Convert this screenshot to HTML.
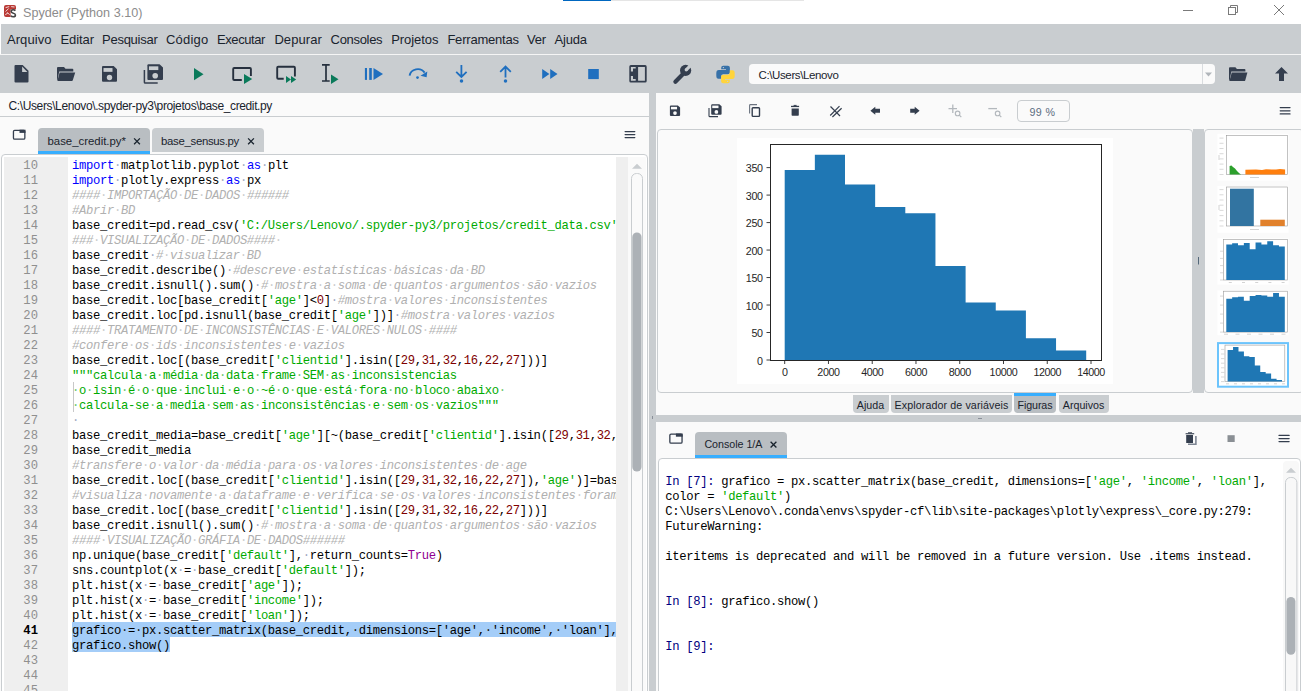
<!DOCTYPE html><html><head><meta charset="utf-8"><style>html,body{margin:0;padding:0;}body{width:1301px;height:691px;overflow:hidden;position:relative;background:#fff;font-family:"Liberation Sans",sans-serif;}</style></head><body>
<div style="position:absolute;left:0px;top:0px;width:1301px;height:24px;background:#ffffff;"></div>
<div style="position:absolute;left:563px;top:0px;width:48px;height:1px;background:#0067c0;"></div>
<div style="position:absolute;left:611px;top:0px;width:193px;height:1px;background:#e5e5e5;"></div>
<div style="position:absolute;left:1px;top:24px;width:1300px;height:30px;background:#c9cdd0;"></div>
<div style="position:absolute;left:0px;top:54px;width:1301px;height:1px;background:#f5f5f5;"></div>
<div style="position:absolute;left:0px;top:55px;width:1301px;height:38px;background:#c9cdd0;"></div>
<div style="position:absolute;left:749px;top:64px;width:466px;height:20px;background:#fafafa;border-radius:4px;"></div>
<div style="position:absolute;left:1202px;top:64px;width:1px;height:20px;background:#d9dcdf;"></div>
<div style="position:absolute;left:0px;top:93px;width:649px;height:598px;background:#fafafa;"></div>
<div style="position:absolute;left:0px;top:116px;width:649px;height:1px;background:#c9cdd0;"></div>
<div style="position:absolute;left:38px;top:128px;width:112px;height:26px;background:#b9bec2;border-radius:4px 4px 0 0;"></div>
<div style="position:absolute;left:38px;top:151px;width:112px;height:3px;background:#37aefe;"></div>
<div style="position:absolute;left:152px;top:128px;width:112px;height:24px;background:#c9cdd0;border-radius:4px 4px 0 0;"></div>
<div style="position:absolute;left:1px;top:154px;width:645px;height:540px;background:#ffffff;border:1px solid #c9cdd0;border-radius:4px;box-sizing:content-box;"></div>
<div style="position:absolute;left:4px;top:157px;width:64px;height:534px;background:#efefef;"></div>
<div style="position:absolute;left:616px;top:157px;width:12px;height:534px;background:#efefef;"></div>
<div style="position:absolute;left:628px;top:157px;width:18px;height:534px;background:#fafafa;"></div>
<div style="position:absolute;left:649px;top:93px;width:7px;height:598px;background:#c9cdd0;"></div>
<div style="position:absolute;left:656px;top:93px;width:645px;height:322px;background:#fafafa;"></div>
<div style="position:absolute;left:657px;top:129px;width:536px;height:264px;background:#fafafa;border:1px solid #c9cdd0;border-radius:4px;box-sizing:border-box;"></div>
<div style="position:absolute;left:737px;top:138px;width:376px;height:246px;background:#ffffff;"></div>
<div style="position:absolute;left:1193px;top:129px;width:11px;height:264px;background:#c9cdd0;"></div>
<div style="position:absolute;left:1204px;top:129px;width:100px;height:264px;background:#fafafa;border:1px solid #c9cdd0;border-radius:4px;box-sizing:border-box;"></div>
<div style="position:absolute;left:1017px;top:100px;width:53px;height:22px;background:#fafafa;border:1px solid #c9cdd0;border-radius:4px;box-sizing:border-box;"></div>
<div style="position:absolute;left:656px;top:415px;width:645px;height:7px;background:#c9cdd0;"></div>
<div style="position:absolute;left:853.3px;top:395px;width:35.30000000000007px;height:17.5px;background:#c9cdd0;border-radius:0 0 4px 4px;"></div>
<div style="position:absolute;left:891.2px;top:395px;width:120.59999999999991px;height:17.5px;background:#c9cdd0;border-radius:0 0 4px 4px;"></div>
<div style="position:absolute;left:1014.3px;top:395px;width:42.0px;height:17.5px;background:#b9bec2;border-radius:0 0 4px 4px;"></div>
<div style="position:absolute;left:1014.3px;top:393px;width:42.0px;height:3px;background:#37aefe;"></div>
<div style="position:absolute;left:1059px;top:395px;width:50px;height:17.5px;background:#c9cdd0;border-radius:0 0 4px 4px;"></div>
<div style="position:absolute;left:656px;top:422px;width:645px;height:269px;background:#fafafa;"></div>
<div style="position:absolute;left:695px;top:432px;width:92px;height:26px;background:#b9bec2;border-radius:4px 4px 0 0;"></div>
<div style="position:absolute;left:695px;top:455px;width:92px;height:3px;background:#37aefe;"></div>
<div style="position:absolute;left:658px;top:458px;width:641px;height:240px;background:#ffffff;border:1px solid #c9cdd0;border-radius:4px;"></div>
<div style="position:absolute;left:1283px;top:461px;width:16px;height:240px;background:#f8f8f8;border-radius:4px;"></div>
<div style="position:absolute;left:68px;top:157px;width:548px;height:534px;overflow:hidden;">
<div style="position:absolute;left:4px;top:465px;width:600px;height:15px;background:#a4cdf8"></div>
<div style="position:absolute;left:4px;top:480px;width:98px;height:15px;background:#a4cdf8"></div>
<div style="position:absolute;left:5px;top:225px;width:1px;height:30px;background:#c8c8c8"></div>
<div style="position:absolute;left:4px;top:2.3px;height:15px;line-height:15px;white-space:pre;font:12.2px 'Liberation Mono', monospace;letter-spacing:-0.321px;"><span style="color:#0000ff;">import</span><span style="color:#a3a9c2">·</span><span style="color:#000000;">matplotlib</span><span style="color:#000000;">.</span><span style="color:#000000;">pyplot</span><span style="color:#a3a9c2">·</span><span style="color:#0000ff;">as</span><span style="color:#a3a9c2">·</span><span style="color:#000000;">plt</span></div>
<div style="position:absolute;left:4px;top:17.3px;height:15px;line-height:15px;white-space:pre;font:12.2px 'Liberation Mono', monospace;letter-spacing:-0.321px;"><span style="color:#0000ff;">import</span><span style="color:#a3a9c2">·</span><span style="color:#000000;">plotly</span><span style="color:#000000;">.</span><span style="color:#000000;">express</span><span style="color:#a3a9c2">·</span><span style="color:#0000ff;">as</span><span style="color:#a3a9c2">·</span><span style="color:#000000;">px</span></div>
<div style="position:absolute;left:4px;top:32.3px;height:15px;line-height:15px;white-space:pre;font:12.2px 'Liberation Mono', monospace;letter-spacing:-0.321px;"><span style="color:#b0b0b0;font-style:italic;">####</span><span style="color:#cdcdcd">·</span><span style="color:#b0b0b0;font-style:italic;">IMPORTAÇÃO</span><span style="color:#cdcdcd">·</span><span style="color:#b0b0b0;font-style:italic;">DE</span><span style="color:#cdcdcd">·</span><span style="color:#b0b0b0;font-style:italic;">DADOS</span><span style="color:#cdcdcd">·</span><span style="color:#b0b0b0;font-style:italic;">######</span></div>
<div style="position:absolute;left:4px;top:47.3px;height:15px;line-height:15px;white-space:pre;font:12.2px 'Liberation Mono', monospace;letter-spacing:-0.321px;"><span style="color:#b0b0b0;font-style:italic;">#Abrir</span><span style="color:#cdcdcd">·</span><span style="color:#b0b0b0;font-style:italic;">BD</span></div>
<div style="position:absolute;left:4px;top:62.3px;height:15px;line-height:15px;white-space:pre;font:12.2px 'Liberation Mono', monospace;letter-spacing:-0.321px;"><span style="color:#000000;">base_credit</span><span style="color:#000000;">=</span><span style="color:#000000;">pd</span><span style="color:#000000;">.</span><span style="color:#000000;">read_csv</span><span style="color:#000000;">(</span><span style="color:#00aa00;">&#x27;C:/Users/Lenovo/.spyder-py3/projetos/credit_data.csv&#x27;</span></div>
<div style="position:absolute;left:4px;top:77.3px;height:15px;line-height:15px;white-space:pre;font:12.2px 'Liberation Mono', monospace;letter-spacing:-0.321px;"><span style="color:#b0b0b0;font-style:italic;">###</span><span style="color:#cdcdcd">·</span><span style="color:#b0b0b0;font-style:italic;">VISUALIZAÇÃO</span><span style="color:#cdcdcd">·</span><span style="color:#b0b0b0;font-style:italic;">DE</span><span style="color:#cdcdcd">·</span><span style="color:#b0b0b0;font-style:italic;">DADOS####</span><span style="color:#cdcdcd">·</span></div>
<div style="position:absolute;left:4px;top:92.3px;height:15px;line-height:15px;white-space:pre;font:12.2px 'Liberation Mono', monospace;letter-spacing:-0.321px;"><span style="color:#000000;">base_credit</span><span style="color:#a3a9c2">·</span><span style="color:#b0b0b0;font-style:italic;">#</span><span style="color:#cdcdcd">·</span><span style="color:#b0b0b0;font-style:italic;">visualizar</span><span style="color:#cdcdcd">·</span><span style="color:#b0b0b0;font-style:italic;">BD</span></div>
<div style="position:absolute;left:4px;top:107.3px;height:15px;line-height:15px;white-space:pre;font:12.2px 'Liberation Mono', monospace;letter-spacing:-0.321px;"><span style="color:#000000;">base_credit</span><span style="color:#000000;">.</span><span style="color:#000000;">describe</span><span style="color:#000000;">(</span><span style="color:#000000;">)</span><span style="color:#a3a9c2">·</span><span style="color:#b0b0b0;font-style:italic;">#descreve</span><span style="color:#cdcdcd">·</span><span style="color:#b0b0b0;font-style:italic;">estatísticas</span><span style="color:#cdcdcd">·</span><span style="color:#b0b0b0;font-style:italic;">básicas</span><span style="color:#cdcdcd">·</span><span style="color:#b0b0b0;font-style:italic;">da</span><span style="color:#cdcdcd">·</span><span style="color:#b0b0b0;font-style:italic;">BD</span></div>
<div style="position:absolute;left:4px;top:122.3px;height:15px;line-height:15px;white-space:pre;font:12.2px 'Liberation Mono', monospace;letter-spacing:-0.321px;"><span style="color:#000000;">base_credit</span><span style="color:#000000;">.</span><span style="color:#000000;">isnull</span><span style="color:#000000;">(</span><span style="color:#000000;">)</span><span style="color:#000000;">.</span><span style="color:#000000;">sum</span><span style="color:#000000;">(</span><span style="color:#000000;">)</span><span style="color:#a3a9c2">·</span><span style="color:#b0b0b0;font-style:italic;">#</span><span style="color:#cdcdcd">·</span><span style="color:#b0b0b0;font-style:italic;">mostra</span><span style="color:#cdcdcd">·</span><span style="color:#b0b0b0;font-style:italic;">a</span><span style="color:#cdcdcd">·</span><span style="color:#b0b0b0;font-style:italic;">soma</span><span style="color:#cdcdcd">·</span><span style="color:#b0b0b0;font-style:italic;">de</span><span style="color:#cdcdcd">·</span><span style="color:#b0b0b0;font-style:italic;">quantos</span><span style="color:#cdcdcd">·</span><span style="color:#b0b0b0;font-style:italic;">argumentos</span><span style="color:#cdcdcd">·</span><span style="color:#b0b0b0;font-style:italic;">são</span><span style="color:#cdcdcd">·</span><span style="color:#b0b0b0;font-style:italic;">vazios</span></div>
<div style="position:absolute;left:4px;top:137.3px;height:15px;line-height:15px;white-space:pre;font:12.2px 'Liberation Mono', monospace;letter-spacing:-0.321px;"><span style="color:#000000;">base_credit</span><span style="color:#000000;">.</span><span style="color:#000000;">loc</span><span style="color:#000000;">[</span><span style="color:#000000;">base_credit</span><span style="color:#000000;">[</span><span style="color:#00aa00;">&#x27;age&#x27;</span><span style="color:#000000;">]</span><span style="color:#000000;">&lt;</span><span style="color:#800000;">0</span><span style="color:#000000;">]</span><span style="color:#a3a9c2">·</span><span style="color:#b0b0b0;font-style:italic;">#mostra</span><span style="color:#cdcdcd">·</span><span style="color:#b0b0b0;font-style:italic;">valores</span><span style="color:#cdcdcd">·</span><span style="color:#b0b0b0;font-style:italic;">inconsistentes</span></div>
<div style="position:absolute;left:4px;top:152.3px;height:15px;line-height:15px;white-space:pre;font:12.2px 'Liberation Mono', monospace;letter-spacing:-0.321px;"><span style="color:#000000;">base_credit</span><span style="color:#000000;">.</span><span style="color:#000000;">loc</span><span style="color:#000000;">[</span><span style="color:#000000;">pd</span><span style="color:#000000;">.</span><span style="color:#000000;">isnull</span><span style="color:#000000;">(</span><span style="color:#000000;">base_credit</span><span style="color:#000000;">[</span><span style="color:#00aa00;">&#x27;age&#x27;</span><span style="color:#000000;">]</span><span style="color:#000000;">)</span><span style="color:#000000;">]</span><span style="color:#a3a9c2">·</span><span style="color:#b0b0b0;font-style:italic;">#mostra</span><span style="color:#cdcdcd">·</span><span style="color:#b0b0b0;font-style:italic;">valores</span><span style="color:#cdcdcd">·</span><span style="color:#b0b0b0;font-style:italic;">vazios</span></div>
<div style="position:absolute;left:4px;top:167.3px;height:15px;line-height:15px;white-space:pre;font:12.2px 'Liberation Mono', monospace;letter-spacing:-0.321px;"><span style="color:#b0b0b0;font-style:italic;">####</span><span style="color:#cdcdcd">·</span><span style="color:#b0b0b0;font-style:italic;">TRATAMENTO</span><span style="color:#cdcdcd">·</span><span style="color:#b0b0b0;font-style:italic;">DE</span><span style="color:#cdcdcd">·</span><span style="color:#b0b0b0;font-style:italic;">INCONSISTÊNCIAS</span><span style="color:#cdcdcd">·</span><span style="color:#b0b0b0;font-style:italic;">E</span><span style="color:#cdcdcd">·</span><span style="color:#b0b0b0;font-style:italic;">VALORES</span><span style="color:#cdcdcd">·</span><span style="color:#b0b0b0;font-style:italic;">NULOS</span><span style="color:#cdcdcd">·</span><span style="color:#b0b0b0;font-style:italic;">####</span></div>
<div style="position:absolute;left:4px;top:182.3px;height:15px;line-height:15px;white-space:pre;font:12.2px 'Liberation Mono', monospace;letter-spacing:-0.321px;"><span style="color:#b0b0b0;font-style:italic;">#confere</span><span style="color:#cdcdcd">·</span><span style="color:#b0b0b0;font-style:italic;">os</span><span style="color:#cdcdcd">·</span><span style="color:#b0b0b0;font-style:italic;">ids</span><span style="color:#cdcdcd">·</span><span style="color:#b0b0b0;font-style:italic;">inconsistentes</span><span style="color:#cdcdcd">·</span><span style="color:#b0b0b0;font-style:italic;">e</span><span style="color:#cdcdcd">·</span><span style="color:#b0b0b0;font-style:italic;">vazios</span></div>
<div style="position:absolute;left:4px;top:197.3px;height:15px;line-height:15px;white-space:pre;font:12.2px 'Liberation Mono', monospace;letter-spacing:-0.321px;"><span style="color:#000000;">base_credit</span><span style="color:#000000;">.</span><span style="color:#000000;">loc</span><span style="color:#000000;">[</span><span style="color:#000000;">(</span><span style="color:#000000;">base_credit</span><span style="color:#000000;">[</span><span style="color:#00aa00;">&#x27;clientid&#x27;</span><span style="color:#000000;">]</span><span style="color:#000000;">.</span><span style="color:#000000;">isin</span><span style="color:#000000;">(</span><span style="color:#000000;">[</span><span style="color:#800000;">29</span><span style="color:#000000;">,</span><span style="color:#800000;">31</span><span style="color:#000000;">,</span><span style="color:#800000;">32</span><span style="color:#000000;">,</span><span style="color:#800000;">16</span><span style="color:#000000;">,</span><span style="color:#800000;">22</span><span style="color:#000000;">,</span><span style="color:#800000;">27</span><span style="color:#000000;">]</span><span style="color:#000000;">)</span><span style="color:#000000;">)</span><span style="color:#000000;">]</span></div>
<div style="position:absolute;left:4px;top:212.3px;height:15px;line-height:15px;white-space:pre;font:12.2px 'Liberation Mono', monospace;letter-spacing:-0.321px;"><span style="color:#00aa00;">&quot;&quot;&quot;calcula</span><span style="color:#6cc86c">·</span><span style="color:#00aa00;">a</span><span style="color:#6cc86c">·</span><span style="color:#00aa00;">média</span><span style="color:#6cc86c">·</span><span style="color:#00aa00;">da</span><span style="color:#6cc86c">·</span><span style="color:#00aa00;">data</span><span style="color:#6cc86c">·</span><span style="color:#00aa00;">frame</span><span style="color:#6cc86c">·</span><span style="color:#00aa00;">SEM</span><span style="color:#6cc86c">·</span><span style="color:#00aa00;">as</span><span style="color:#6cc86c">·</span><span style="color:#00aa00;">inconsistencias</span></div>
<div style="position:absolute;left:4px;top:227.3px;height:15px;line-height:15px;white-space:pre;font:12.2px 'Liberation Mono', monospace;letter-spacing:-0.321px;"><span style="color:#6cc86c">·</span><span style="color:#00aa00;">o</span><span style="color:#6cc86c">·</span><span style="color:#00aa00;">isin</span><span style="color:#6cc86c">·</span><span style="color:#00aa00;">é</span><span style="color:#6cc86c">·</span><span style="color:#00aa00;">o</span><span style="color:#6cc86c">·</span><span style="color:#00aa00;">que</span><span style="color:#6cc86c">·</span><span style="color:#00aa00;">inclui</span><span style="color:#6cc86c">·</span><span style="color:#00aa00;">e</span><span style="color:#6cc86c">·</span><span style="color:#00aa00;">o</span><span style="color:#6cc86c">·</span><span style="color:#00aa00;">~é</span><span style="color:#6cc86c">·</span><span style="color:#00aa00;">o</span><span style="color:#6cc86c">·</span><span style="color:#00aa00;">que</span><span style="color:#6cc86c">·</span><span style="color:#00aa00;">está</span><span style="color:#6cc86c">·</span><span style="color:#00aa00;">fora</span><span style="color:#6cc86c">·</span><span style="color:#00aa00;">no</span><span style="color:#6cc86c">·</span><span style="color:#00aa00;">bloco</span><span style="color:#6cc86c">·</span><span style="color:#00aa00;">abaixo</span><span style="color:#6cc86c">·</span></div>
<div style="position:absolute;left:4px;top:242.3px;height:15px;line-height:15px;white-space:pre;font:12.2px 'Liberation Mono', monospace;letter-spacing:-0.321px;"><span style="color:#6cc86c">·</span><span style="color:#00aa00;">calcula-se</span><span style="color:#6cc86c">·</span><span style="color:#00aa00;">a</span><span style="color:#6cc86c">·</span><span style="color:#00aa00;">media</span><span style="color:#6cc86c">·</span><span style="color:#00aa00;">sem</span><span style="color:#6cc86c">·</span><span style="color:#00aa00;">as</span><span style="color:#6cc86c">·</span><span style="color:#00aa00;">inconsistências</span><span style="color:#6cc86c">·</span><span style="color:#00aa00;">e</span><span style="color:#6cc86c">·</span><span style="color:#00aa00;">sem</span><span style="color:#6cc86c">·</span><span style="color:#00aa00;">os</span><span style="color:#6cc86c">·</span><span style="color:#00aa00;">vazios&quot;&quot;&quot;</span></div>
<div style="position:absolute;left:4px;top:257.3px;height:15px;line-height:15px;white-space:pre;font:12.2px 'Liberation Mono', monospace;letter-spacing:-0.321px;"><span style="color:#a3a9c2">·</span></div>
<div style="position:absolute;left:4px;top:272.3px;height:15px;line-height:15px;white-space:pre;font:12.2px 'Liberation Mono', monospace;letter-spacing:-0.321px;"><span style="color:#000000;">base_credit_media</span><span style="color:#000000;">=</span><span style="color:#000000;">base_credit</span><span style="color:#000000;">[</span><span style="color:#00aa00;">&#x27;age&#x27;</span><span style="color:#000000;">]</span><span style="color:#000000;">[</span><span style="color:#000000;">~</span><span style="color:#000000;">(</span><span style="color:#000000;">base_credit</span><span style="color:#000000;">[</span><span style="color:#00aa00;">&#x27;clientid&#x27;</span><span style="color:#000000;">]</span><span style="color:#000000;">.</span><span style="color:#000000;">isin</span><span style="color:#000000;">(</span><span style="color:#000000;">[</span><span style="color:#800000;">29</span><span style="color:#000000;">,</span><span style="color:#800000;">31</span><span style="color:#000000;">,</span><span style="color:#800000;">32</span><span style="color:#000000;">,</span></div>
<div style="position:absolute;left:4px;top:287.3px;height:15px;line-height:15px;white-space:pre;font:12.2px 'Liberation Mono', monospace;letter-spacing:-0.321px;"><span style="color:#000000;">base_credit_media</span></div>
<div style="position:absolute;left:4px;top:302.3px;height:15px;line-height:15px;white-space:pre;font:12.2px 'Liberation Mono', monospace;letter-spacing:-0.321px;"><span style="color:#b0b0b0;font-style:italic;">#transfere</span><span style="color:#cdcdcd">·</span><span style="color:#b0b0b0;font-style:italic;">o</span><span style="color:#cdcdcd">·</span><span style="color:#b0b0b0;font-style:italic;">valor</span><span style="color:#cdcdcd">·</span><span style="color:#b0b0b0;font-style:italic;">da</span><span style="color:#cdcdcd">·</span><span style="color:#b0b0b0;font-style:italic;">média</span><span style="color:#cdcdcd">·</span><span style="color:#b0b0b0;font-style:italic;">para</span><span style="color:#cdcdcd">·</span><span style="color:#b0b0b0;font-style:italic;">os</span><span style="color:#cdcdcd">·</span><span style="color:#b0b0b0;font-style:italic;">valores</span><span style="color:#cdcdcd">·</span><span style="color:#b0b0b0;font-style:italic;">inconsistentes</span><span style="color:#cdcdcd">·</span><span style="color:#b0b0b0;font-style:italic;">de</span><span style="color:#cdcdcd">·</span><span style="color:#b0b0b0;font-style:italic;">age</span></div>
<div style="position:absolute;left:4px;top:317.3px;height:15px;line-height:15px;white-space:pre;font:12.2px 'Liberation Mono', monospace;letter-spacing:-0.321px;"><span style="color:#000000;">base_credit</span><span style="color:#000000;">.</span><span style="color:#000000;">loc</span><span style="color:#000000;">[</span><span style="color:#000000;">(</span><span style="color:#000000;">base_credit</span><span style="color:#000000;">[</span><span style="color:#00aa00;">&#x27;clientid&#x27;</span><span style="color:#000000;">]</span><span style="color:#000000;">.</span><span style="color:#000000;">isin</span><span style="color:#000000;">(</span><span style="color:#000000;">[</span><span style="color:#800000;">29</span><span style="color:#000000;">,</span><span style="color:#800000;">31</span><span style="color:#000000;">,</span><span style="color:#800000;">32</span><span style="color:#000000;">,</span><span style="color:#800000;">16</span><span style="color:#000000;">,</span><span style="color:#800000;">22</span><span style="color:#000000;">,</span><span style="color:#800000;">27</span><span style="color:#000000;">]</span><span style="color:#000000;">)</span><span style="color:#000000;">,</span><span style="color:#00aa00;">&#x27;age&#x27;</span><span style="color:#000000;">)</span><span style="color:#000000;">]</span><span style="color:#000000;">=</span><span style="color:#000000;">bas</span></div>
<div style="position:absolute;left:4px;top:332.3px;height:15px;line-height:15px;white-space:pre;font:12.2px 'Liberation Mono', monospace;letter-spacing:-0.321px;"><span style="color:#b0b0b0;font-style:italic;">#visualiza</span><span style="color:#cdcdcd">·</span><span style="color:#b0b0b0;font-style:italic;">novamente</span><span style="color:#cdcdcd">·</span><span style="color:#b0b0b0;font-style:italic;">a</span><span style="color:#cdcdcd">·</span><span style="color:#b0b0b0;font-style:italic;">dataframe</span><span style="color:#cdcdcd">·</span><span style="color:#b0b0b0;font-style:italic;">e</span><span style="color:#cdcdcd">·</span><span style="color:#b0b0b0;font-style:italic;">verifica</span><span style="color:#cdcdcd">·</span><span style="color:#b0b0b0;font-style:italic;">se</span><span style="color:#cdcdcd">·</span><span style="color:#b0b0b0;font-style:italic;">os</span><span style="color:#cdcdcd">·</span><span style="color:#b0b0b0;font-style:italic;">valores</span><span style="color:#cdcdcd">·</span><span style="color:#b0b0b0;font-style:italic;">inconsistentes</span><span style="color:#cdcdcd">·</span><span style="color:#b0b0b0;font-style:italic;">foram</span></div>
<div style="position:absolute;left:4px;top:347.3px;height:15px;line-height:15px;white-space:pre;font:12.2px 'Liberation Mono', monospace;letter-spacing:-0.321px;"><span style="color:#000000;">base_credit</span><span style="color:#000000;">.</span><span style="color:#000000;">loc</span><span style="color:#000000;">[</span><span style="color:#000000;">(</span><span style="color:#000000;">base_credit</span><span style="color:#000000;">[</span><span style="color:#00aa00;">&#x27;clientid&#x27;</span><span style="color:#000000;">]</span><span style="color:#000000;">.</span><span style="color:#000000;">isin</span><span style="color:#000000;">(</span><span style="color:#000000;">[</span><span style="color:#800000;">29</span><span style="color:#000000;">,</span><span style="color:#800000;">31</span><span style="color:#000000;">,</span><span style="color:#800000;">32</span><span style="color:#000000;">,</span><span style="color:#800000;">16</span><span style="color:#000000;">,</span><span style="color:#800000;">22</span><span style="color:#000000;">,</span><span style="color:#800000;">27</span><span style="color:#000000;">]</span><span style="color:#000000;">)</span><span style="color:#000000;">)</span><span style="color:#000000;">]</span></div>
<div style="position:absolute;left:4px;top:362.3px;height:15px;line-height:15px;white-space:pre;font:12.2px 'Liberation Mono', monospace;letter-spacing:-0.321px;"><span style="color:#000000;">base_credit</span><span style="color:#000000;">.</span><span style="color:#000000;">isnull</span><span style="color:#000000;">(</span><span style="color:#000000;">)</span><span style="color:#000000;">.</span><span style="color:#000000;">sum</span><span style="color:#000000;">(</span><span style="color:#000000;">)</span><span style="color:#a3a9c2">·</span><span style="color:#b0b0b0;font-style:italic;">#</span><span style="color:#cdcdcd">·</span><span style="color:#b0b0b0;font-style:italic;">mostra</span><span style="color:#cdcdcd">·</span><span style="color:#b0b0b0;font-style:italic;">a</span><span style="color:#cdcdcd">·</span><span style="color:#b0b0b0;font-style:italic;">soma</span><span style="color:#cdcdcd">·</span><span style="color:#b0b0b0;font-style:italic;">de</span><span style="color:#cdcdcd">·</span><span style="color:#b0b0b0;font-style:italic;">quantos</span><span style="color:#cdcdcd">·</span><span style="color:#b0b0b0;font-style:italic;">argumentos</span><span style="color:#cdcdcd">·</span><span style="color:#b0b0b0;font-style:italic;">são</span><span style="color:#cdcdcd">·</span><span style="color:#b0b0b0;font-style:italic;">vazios</span></div>
<div style="position:absolute;left:4px;top:377.3px;height:15px;line-height:15px;white-space:pre;font:12.2px 'Liberation Mono', monospace;letter-spacing:-0.321px;"><span style="color:#b0b0b0;font-style:italic;">####</span><span style="color:#cdcdcd">·</span><span style="color:#b0b0b0;font-style:italic;">VISUALIZAÇÃO</span><span style="color:#cdcdcd">·</span><span style="color:#b0b0b0;font-style:italic;">GRÁFIA</span><span style="color:#cdcdcd">·</span><span style="color:#b0b0b0;font-style:italic;">DE</span><span style="color:#cdcdcd">·</span><span style="color:#b0b0b0;font-style:italic;">DADOS######</span></div>
<div style="position:absolute;left:4px;top:392.3px;height:15px;line-height:15px;white-space:pre;font:12.2px 'Liberation Mono', monospace;letter-spacing:-0.321px;"><span style="color:#000000;">np</span><span style="color:#000000;">.</span><span style="color:#000000;">unique</span><span style="color:#000000;">(</span><span style="color:#000000;">base_credit</span><span style="color:#000000;">[</span><span style="color:#00aa00;">&#x27;default&#x27;</span><span style="color:#000000;">]</span><span style="color:#000000;">,</span><span style="color:#a3a9c2">·</span><span style="color:#000000;">return_counts</span><span style="color:#000000;">=</span><span style="color:#900090;">True</span><span style="color:#000000;">)</span></div>
<div style="position:absolute;left:4px;top:407.3px;height:15px;line-height:15px;white-space:pre;font:12.2px 'Liberation Mono', monospace;letter-spacing:-0.321px;"><span style="color:#000000;">sns</span><span style="color:#000000;">.</span><span style="color:#000000;">countplot</span><span style="color:#000000;">(</span><span style="color:#000000;">x</span><span style="color:#a3a9c2">·</span><span style="color:#000000;">=</span><span style="color:#a3a9c2">·</span><span style="color:#000000;">base_credit</span><span style="color:#000000;">[</span><span style="color:#00aa00;">&#x27;default&#x27;</span><span style="color:#000000;">]</span><span style="color:#000000;">)</span><span style="color:#000000;">;</span></div>
<div style="position:absolute;left:4px;top:422.3px;height:15px;line-height:15px;white-space:pre;font:12.2px 'Liberation Mono', monospace;letter-spacing:-0.321px;"><span style="color:#000000;">plt</span><span style="color:#000000;">.</span><span style="color:#000000;">hist</span><span style="color:#000000;">(</span><span style="color:#000000;">x</span><span style="color:#a3a9c2">·</span><span style="color:#000000;">=</span><span style="color:#a3a9c2">·</span><span style="color:#000000;">base_credit</span><span style="color:#000000;">[</span><span style="color:#00aa00;">&#x27;age&#x27;</span><span style="color:#000000;">]</span><span style="color:#000000;">)</span><span style="color:#000000;">;</span></div>
<div style="position:absolute;left:4px;top:437.3px;height:15px;line-height:15px;white-space:pre;font:12.2px 'Liberation Mono', monospace;letter-spacing:-0.321px;"><span style="color:#000000;">plt</span><span style="color:#000000;">.</span><span style="color:#000000;">hist</span><span style="color:#000000;">(</span><span style="color:#000000;">x</span><span style="color:#a3a9c2">·</span><span style="color:#000000;">=</span><span style="color:#a3a9c2">·</span><span style="color:#000000;">base_credit</span><span style="color:#000000;">[</span><span style="color:#00aa00;">&#x27;income&#x27;</span><span style="color:#000000;">]</span><span style="color:#000000;">)</span><span style="color:#000000;">;</span></div>
<div style="position:absolute;left:4px;top:452.3px;height:15px;line-height:15px;white-space:pre;font:12.2px 'Liberation Mono', monospace;letter-spacing:-0.321px;"><span style="color:#000000;">plt</span><span style="color:#000000;">.</span><span style="color:#000000;">hist</span><span style="color:#000000;">(</span><span style="color:#000000;">x</span><span style="color:#a3a9c2">·</span><span style="color:#000000;">=</span><span style="color:#a3a9c2">·</span><span style="color:#000000;">base_credit</span><span style="color:#000000;">[</span><span style="color:#00aa00;">&#x27;loan&#x27;</span><span style="color:#000000;">]</span><span style="color:#000000;">)</span><span style="color:#000000;">;</span></div>
<div style="position:absolute;left:4px;top:467.3px;height:15px;line-height:15px;white-space:pre;font:12.2px 'Liberation Mono', monospace;letter-spacing:-0.321px;"><span style="color:#000000;">grafico</span><span style="color:#1a1a1a">·</span><span style="color:#000000;">=</span><span style="color:#1a1a1a">·</span><span style="color:#000000;">px</span><span style="color:#000000;">.</span><span style="color:#000000;">scatter_matrix</span><span style="color:#000000;">(</span><span style="color:#000000;">base_credit</span><span style="color:#000000;">,</span><span style="color:#1a1a1a">·</span><span style="color:#000000;">dimensions</span><span style="color:#000000;">=</span><span style="color:#000000;">[</span><span style="color:#000000;">&#x27;age&#x27;</span><span style="color:#000000;">,</span><span style="color:#1a1a1a">·</span><span style="color:#000000;">&#x27;income&#x27;</span><span style="color:#000000;">,</span><span style="color:#1a1a1a">·</span><span style="color:#000000;">&#x27;loan&#x27;</span><span style="color:#000000;">]</span><span style="color:#000000;">,</span></div>
<div style="position:absolute;left:4px;top:482.3px;height:15px;line-height:15px;white-space:pre;font:12.2px 'Liberation Mono', monospace;letter-spacing:-0.321px;"><span style="color:#000000;">grafico</span><span style="color:#000000;">.</span><span style="color:#000000;">show</span><span style="color:#000000;">(</span><span style="color:#000000;">)</span></div>
</div>
<div style="position:absolute;left:3px;width:35px;text-align:right;top:159.3px;height:15px;line-height:15px;white-space:pre;font:12.2px 'Liberation Mono', monospace;color:#8f8f8f;">10</div>
<div style="position:absolute;left:3px;width:35px;text-align:right;top:174.3px;height:15px;line-height:15px;white-space:pre;font:12.2px 'Liberation Mono', monospace;color:#8f8f8f;">11</div>
<div style="position:absolute;left:3px;width:35px;text-align:right;top:189.3px;height:15px;line-height:15px;white-space:pre;font:12.2px 'Liberation Mono', monospace;color:#8f8f8f;">12</div>
<div style="position:absolute;left:3px;width:35px;text-align:right;top:204.3px;height:15px;line-height:15px;white-space:pre;font:12.2px 'Liberation Mono', monospace;color:#8f8f8f;">13</div>
<div style="position:absolute;left:3px;width:35px;text-align:right;top:219.3px;height:15px;line-height:15px;white-space:pre;font:12.2px 'Liberation Mono', monospace;color:#8f8f8f;">14</div>
<div style="position:absolute;left:3px;width:35px;text-align:right;top:234.3px;height:15px;line-height:15px;white-space:pre;font:12.2px 'Liberation Mono', monospace;color:#8f8f8f;">15</div>
<div style="position:absolute;left:3px;width:35px;text-align:right;top:249.3px;height:15px;line-height:15px;white-space:pre;font:12.2px 'Liberation Mono', monospace;color:#8f8f8f;">16</div>
<div style="position:absolute;left:3px;width:35px;text-align:right;top:264.3px;height:15px;line-height:15px;white-space:pre;font:12.2px 'Liberation Mono', monospace;color:#8f8f8f;">17</div>
<div style="position:absolute;left:3px;width:35px;text-align:right;top:279.3px;height:15px;line-height:15px;white-space:pre;font:12.2px 'Liberation Mono', monospace;color:#8f8f8f;">18</div>
<div style="position:absolute;left:3px;width:35px;text-align:right;top:294.3px;height:15px;line-height:15px;white-space:pre;font:12.2px 'Liberation Mono', monospace;color:#8f8f8f;">19</div>
<div style="position:absolute;left:3px;width:35px;text-align:right;top:309.3px;height:15px;line-height:15px;white-space:pre;font:12.2px 'Liberation Mono', monospace;color:#8f8f8f;">20</div>
<div style="position:absolute;left:3px;width:35px;text-align:right;top:324.3px;height:15px;line-height:15px;white-space:pre;font:12.2px 'Liberation Mono', monospace;color:#8f8f8f;">21</div>
<div style="position:absolute;left:3px;width:35px;text-align:right;top:339.3px;height:15px;line-height:15px;white-space:pre;font:12.2px 'Liberation Mono', monospace;color:#8f8f8f;">22</div>
<div style="position:absolute;left:3px;width:35px;text-align:right;top:354.3px;height:15px;line-height:15px;white-space:pre;font:12.2px 'Liberation Mono', monospace;color:#8f8f8f;">23</div>
<div style="position:absolute;left:3px;width:35px;text-align:right;top:369.3px;height:15px;line-height:15px;white-space:pre;font:12.2px 'Liberation Mono', monospace;color:#8f8f8f;">24</div>
<div style="position:absolute;left:3px;width:35px;text-align:right;top:384.3px;height:15px;line-height:15px;white-space:pre;font:12.2px 'Liberation Mono', monospace;color:#8f8f8f;">25</div>
<div style="position:absolute;left:3px;width:35px;text-align:right;top:399.3px;height:15px;line-height:15px;white-space:pre;font:12.2px 'Liberation Mono', monospace;color:#8f8f8f;">26</div>
<div style="position:absolute;left:3px;width:35px;text-align:right;top:414.3px;height:15px;line-height:15px;white-space:pre;font:12.2px 'Liberation Mono', monospace;color:#8f8f8f;">27</div>
<div style="position:absolute;left:3px;width:35px;text-align:right;top:429.3px;height:15px;line-height:15px;white-space:pre;font:12.2px 'Liberation Mono', monospace;color:#8f8f8f;">28</div>
<div style="position:absolute;left:3px;width:35px;text-align:right;top:444.3px;height:15px;line-height:15px;white-space:pre;font:12.2px 'Liberation Mono', monospace;color:#8f8f8f;">29</div>
<div style="position:absolute;left:3px;width:35px;text-align:right;top:459.3px;height:15px;line-height:15px;white-space:pre;font:12.2px 'Liberation Mono', monospace;color:#8f8f8f;">30</div>
<div style="position:absolute;left:3px;width:35px;text-align:right;top:474.3px;height:15px;line-height:15px;white-space:pre;font:12.2px 'Liberation Mono', monospace;color:#8f8f8f;">31</div>
<div style="position:absolute;left:3px;width:35px;text-align:right;top:489.3px;height:15px;line-height:15px;white-space:pre;font:12.2px 'Liberation Mono', monospace;color:#8f8f8f;">32</div>
<div style="position:absolute;left:3px;width:35px;text-align:right;top:504.3px;height:15px;line-height:15px;white-space:pre;font:12.2px 'Liberation Mono', monospace;color:#8f8f8f;">33</div>
<div style="position:absolute;left:3px;width:35px;text-align:right;top:519.3px;height:15px;line-height:15px;white-space:pre;font:12.2px 'Liberation Mono', monospace;color:#8f8f8f;">34</div>
<div style="position:absolute;left:3px;width:35px;text-align:right;top:534.3px;height:15px;line-height:15px;white-space:pre;font:12.2px 'Liberation Mono', monospace;color:#8f8f8f;">35</div>
<div style="position:absolute;left:3px;width:35px;text-align:right;top:549.3px;height:15px;line-height:15px;white-space:pre;font:12.2px 'Liberation Mono', monospace;color:#8f8f8f;">36</div>
<div style="position:absolute;left:3px;width:35px;text-align:right;top:564.3px;height:15px;line-height:15px;white-space:pre;font:12.2px 'Liberation Mono', monospace;color:#8f8f8f;">37</div>
<div style="position:absolute;left:3px;width:35px;text-align:right;top:579.3px;height:15px;line-height:15px;white-space:pre;font:12.2px 'Liberation Mono', monospace;color:#8f8f8f;">38</div>
<div style="position:absolute;left:3px;width:35px;text-align:right;top:594.3px;height:15px;line-height:15px;white-space:pre;font:12.2px 'Liberation Mono', monospace;color:#8f8f8f;">39</div>
<div style="position:absolute;left:3px;width:35px;text-align:right;top:609.3px;height:15px;line-height:15px;white-space:pre;font:12.2px 'Liberation Mono', monospace;color:#8f8f8f;">40</div>
<div style="position:absolute;left:3px;width:35px;text-align:right;top:624.3px;height:15px;line-height:15px;white-space:pre;font:bold 12.2px 'Liberation Mono', monospace;color:#000;">41</div>
<div style="position:absolute;left:3px;width:35px;text-align:right;top:639.3px;height:15px;line-height:15px;white-space:pre;font:12.2px 'Liberation Mono', monospace;color:#8f8f8f;">42</div>
<div style="position:absolute;left:3px;width:35px;text-align:right;top:654.3px;height:15px;line-height:15px;white-space:pre;font:12.2px 'Liberation Mono', monospace;color:#8f8f8f;">43</div>
<div style="position:absolute;left:3px;width:35px;text-align:right;top:669.3px;height:15px;line-height:15px;white-space:pre;font:12.2px 'Liberation Mono', monospace;color:#8f8f8f;">44</div>
<div style="position:absolute;left:3px;width:35px;text-align:right;top:684.3px;height:15px;line-height:15px;white-space:pre;font:12.2px 'Liberation Mono', monospace;color:#8f8f8f;">45</div>
<div style="position:absolute;left:665.2px;top:474.8px;height:15px;line-height:15px;white-space:pre;font:12.2px 'Liberation Mono', monospace;letter-spacing:-0.321px;"><span style="color:#000080;">In [</span><span style="color:#000080;">7</span><span style="color:#000080;">]: </span><span style="color:#000000;">grafico = px.scatter_matrix(base_credit, dimensions=[</span><span style="color:#00aa00;">&#x27;age&#x27;</span><span style="color:#000000;">, </span><span style="color:#00aa00;">&#x27;income&#x27;</span><span style="color:#000000;">, </span><span style="color:#00aa00;">&#x27;loan&#x27;</span><span style="color:#000000;">],</span></div>
<div style="position:absolute;left:665.2px;top:489.8px;height:15px;line-height:15px;white-space:pre;font:12.2px 'Liberation Mono', monospace;letter-spacing:-0.321px;"><span style="color:#000000;">color = </span><span style="color:#00aa00;">&#x27;default&#x27;</span><span style="color:#000000;">)</span></div>
<div style="position:absolute;left:665.2px;top:504.8px;height:15px;line-height:15px;white-space:pre;font:12.2px 'Liberation Mono', monospace;letter-spacing:-0.321px;"><span style="color:#000000;">C:\Users\Lenovo\.conda\envs\spyder-cf\lib\site-packages\plotly\express\_core.py:279:</span></div>
<div style="position:absolute;left:665.2px;top:519.8px;height:15px;line-height:15px;white-space:pre;font:12.2px 'Liberation Mono', monospace;letter-spacing:-0.321px;"><span style="color:#000000;">FutureWarning:</span></div>
<div style="position:absolute;left:665.2px;top:534.8px;height:15px;line-height:15px;white-space:pre;font:12.2px 'Liberation Mono', monospace;letter-spacing:-0.321px;"></div>
<div style="position:absolute;left:665.2px;top:549.8px;height:15px;line-height:15px;white-space:pre;font:12.2px 'Liberation Mono', monospace;letter-spacing:-0.321px;"><span style="color:#000000;">iteritems is deprecated and will be removed in a future version. Use .items instead.</span></div>
<div style="position:absolute;left:665.2px;top:564.8px;height:15px;line-height:15px;white-space:pre;font:12.2px 'Liberation Mono', monospace;letter-spacing:-0.321px;"></div>
<div style="position:absolute;left:665.2px;top:579.8px;height:15px;line-height:15px;white-space:pre;font:12.2px 'Liberation Mono', monospace;letter-spacing:-0.321px;"></div>
<div style="position:absolute;left:665.2px;top:594.8px;height:15px;line-height:15px;white-space:pre;font:12.2px 'Liberation Mono', monospace;letter-spacing:-0.321px;"><span style="color:#000080;">In [</span><span style="color:#000080;">8</span><span style="color:#000080;">]: </span><span style="color:#000000;">grafico.show()</span></div>
<div style="position:absolute;left:665.2px;top:609.8px;height:15px;line-height:15px;white-space:pre;font:12.2px 'Liberation Mono', monospace;letter-spacing:-0.321px;"></div>
<div style="position:absolute;left:665.2px;top:624.8px;height:15px;line-height:15px;white-space:pre;font:12.2px 'Liberation Mono', monospace;letter-spacing:-0.321px;"></div>
<div style="position:absolute;left:665.2px;top:639.8px;height:15px;line-height:15px;white-space:pre;font:12.2px 'Liberation Mono', monospace;letter-spacing:-0.321px;"><span style="color:#000080;">In [</span><span style="color:#000080;">9</span><span style="color:#000080;">]: </span></div>
<svg style="position:absolute;left:0;top:0" width="1301" height="691" viewBox="0 0 1301 691">
<path d="M784.70 360.5 V169.90 H814.85 V154.80 H845.00 V184.60 H875.15 V207.10 H905.30 V213.20 H935.45 V266.00 H965.60 V302.60 H995.75 V310.60 H1025.90 V338.30 H1056.05 V350.40 H1086.20 V360.5 Z" fill="#1f77b4"/>
<rect x="770.5" y="144.5" width="331" height="216" fill="none" stroke="#262626" stroke-width="1"/>
<line x1="766.5" y1="360.00" x2="770" y2="360.00" stroke="#262626" stroke-width="0.9"/>
<text x="762.5" y="364.70" font-family="Liberation Sans" font-size="10.7" fill="#262626" text-anchor="end" letter-spacing="-0.4">0</text>
<line x1="766.5" y1="332.51" x2="770" y2="332.51" stroke="#262626" stroke-width="0.9"/>
<text x="762.5" y="337.21" font-family="Liberation Sans" font-size="10.7" fill="#262626" text-anchor="end" letter-spacing="-0.4">50</text>
<line x1="766.5" y1="305.03" x2="770" y2="305.03" stroke="#262626" stroke-width="0.9"/>
<text x="762.5" y="309.73" font-family="Liberation Sans" font-size="10.7" fill="#262626" text-anchor="end" letter-spacing="-0.4">100</text>
<line x1="766.5" y1="277.55" x2="770" y2="277.55" stroke="#262626" stroke-width="0.9"/>
<text x="762.5" y="282.25" font-family="Liberation Sans" font-size="10.7" fill="#262626" text-anchor="end" letter-spacing="-0.4">150</text>
<line x1="766.5" y1="250.06" x2="770" y2="250.06" stroke="#262626" stroke-width="0.9"/>
<text x="762.5" y="254.76" font-family="Liberation Sans" font-size="10.7" fill="#262626" text-anchor="end" letter-spacing="-0.4">200</text>
<line x1="766.5" y1="222.58" x2="770" y2="222.58" stroke="#262626" stroke-width="0.9"/>
<text x="762.5" y="227.28" font-family="Liberation Sans" font-size="10.7" fill="#262626" text-anchor="end" letter-spacing="-0.4">250</text>
<line x1="766.5" y1="195.09" x2="770" y2="195.09" stroke="#262626" stroke-width="0.9"/>
<text x="762.5" y="199.79" font-family="Liberation Sans" font-size="10.7" fill="#262626" text-anchor="end" letter-spacing="-0.4">300</text>
<line x1="766.5" y1="167.61" x2="770" y2="167.61" stroke="#262626" stroke-width="0.9"/>
<text x="762.5" y="172.31" font-family="Liberation Sans" font-size="10.7" fill="#262626" text-anchor="end" letter-spacing="-0.4">350</text>
<line x1="784.70" y1="361" x2="784.70" y2="364" stroke="#262626" stroke-width="0.9"/>
<text x="784.70" y="375.8" font-family="Liberation Sans" font-size="10.7" fill="#262626" text-anchor="middle" letter-spacing="-0.4">0</text>
<line x1="828.46" y1="361" x2="828.46" y2="364" stroke="#262626" stroke-width="0.9"/>
<text x="828.46" y="375.8" font-family="Liberation Sans" font-size="10.7" fill="#262626" text-anchor="middle" letter-spacing="-0.4">2000</text>
<line x1="872.22" y1="361" x2="872.22" y2="364" stroke="#262626" stroke-width="0.9"/>
<text x="872.22" y="375.8" font-family="Liberation Sans" font-size="10.7" fill="#262626" text-anchor="middle" letter-spacing="-0.4">4000</text>
<line x1="915.97" y1="361" x2="915.97" y2="364" stroke="#262626" stroke-width="0.9"/>
<text x="915.97" y="375.8" font-family="Liberation Sans" font-size="10.7" fill="#262626" text-anchor="middle" letter-spacing="-0.4">6000</text>
<line x1="959.73" y1="361" x2="959.73" y2="364" stroke="#262626" stroke-width="0.9"/>
<text x="959.73" y="375.8" font-family="Liberation Sans" font-size="10.7" fill="#262626" text-anchor="middle" letter-spacing="-0.4">8000</text>
<line x1="1003.49" y1="361" x2="1003.49" y2="364" stroke="#262626" stroke-width="0.9"/>
<text x="1003.49" y="375.8" font-family="Liberation Sans" font-size="10.7" fill="#262626" text-anchor="middle" letter-spacing="-0.4">10000</text>
<line x1="1047.25" y1="361" x2="1047.25" y2="364" stroke="#262626" stroke-width="0.9"/>
<text x="1047.25" y="375.8" font-family="Liberation Sans" font-size="10.7" fill="#262626" text-anchor="middle" letter-spacing="-0.4">12000</text>
<line x1="1091.01" y1="361" x2="1091.01" y2="364" stroke="#262626" stroke-width="0.9"/>
<text x="1091.01" y="375.8" font-family="Liberation Sans" font-size="10.7" fill="#262626" text-anchor="middle" letter-spacing="-0.4">14000</text>
<rect x="1217.4" y="133.8" width="71.2" height="46.8" fill="#ffffff"/>
<rect x="1226.3" y="135.4" width="61.299999999999955" height="39.099999999999994" fill="none" stroke="#9a9a9a" stroke-width="0.6"/>
<path d="M1229.6 174.5 L1229.6 166 L1231.5 165.6 L1233 167 L1235 168.5 L1237 171 L1239 173 L1241 174.5 Z" fill="#2ca02c"/>
<path d="M1245.4 174.5 L1245.4 169.8 L1256 169.4 L1262 170 L1266 169.3 L1276 169.5 L1280 169 L1285.1 169.6 L1285.1 174.5 Z" fill="#ff7f0e"/>
<line x1="1219.5" y1="174.5" x2="1223.5" y2="174.5" stroke="#c8c8c8" stroke-width="0.7"/>
<line x1="1219.5" y1="169.3" x2="1223.5" y2="169.3" stroke="#c8c8c8" stroke-width="0.7"/>
<line x1="1219.5" y1="164.1" x2="1223.5" y2="164.1" stroke="#c8c8c8" stroke-width="0.7"/>
<line x1="1219.5" y1="158.9" x2="1223.5" y2="158.9" stroke="#c8c8c8" stroke-width="0.7"/>
<line x1="1219.5" y1="153.7" x2="1223.5" y2="153.7" stroke="#c8c8c8" stroke-width="0.7"/>
<line x1="1219.5" y1="148.5" x2="1223.5" y2="148.5" stroke="#c8c8c8" stroke-width="0.7"/>
<line x1="1219.5" y1="143.3" x2="1223.5" y2="143.3" stroke="#c8c8c8" stroke-width="0.7"/>
<line x1="1219.5" y1="138.1" x2="1223.5" y2="138.1" stroke="#c8c8c8" stroke-width="0.7"/>
<line x1="1250" y1="177.5" x2="1259" y2="177.5" stroke="#c8c8c8" stroke-width="0.8"/>
<line x1="1219" y1="155" x2="1219" y2="160" stroke="#c8c8c8" stroke-width="0.8"/>
<rect x="1217.4" y="186" width="71.2" height="46.7" fill="#ffffff"/>
<rect x="1226.3" y="187" width="61.299999999999955" height="39" fill="none" stroke="#9a9a9a" stroke-width="0.6"/>
<rect x="1230" y="188.7" width="23.8" height="37.3" fill="#3274a1"/>
<rect x="1260.3" y="219.7" width="24.5" height="6.3" fill="#e1812c"/>
<line x1="1219.5" y1="226.0" x2="1223.5" y2="226.0" stroke="#c8c8c8" stroke-width="0.7"/>
<line x1="1219.5" y1="220.8" x2="1223.5" y2="220.8" stroke="#c8c8c8" stroke-width="0.7"/>
<line x1="1219.5" y1="215.6" x2="1223.5" y2="215.6" stroke="#c8c8c8" stroke-width="0.7"/>
<line x1="1219.5" y1="210.4" x2="1223.5" y2="210.4" stroke="#c8c8c8" stroke-width="0.7"/>
<line x1="1219.5" y1="205.2" x2="1223.5" y2="205.2" stroke="#c8c8c8" stroke-width="0.7"/>
<line x1="1219.5" y1="200.0" x2="1223.5" y2="200.0" stroke="#c8c8c8" stroke-width="0.7"/>
<line x1="1219.5" y1="194.8" x2="1223.5" y2="194.8" stroke="#c8c8c8" stroke-width="0.7"/>
<line x1="1219.5" y1="189.6" x2="1223.5" y2="189.6" stroke="#c8c8c8" stroke-width="0.7"/>
<line x1="1250" y1="229.5" x2="1259" y2="229.5" stroke="#c8c8c8" stroke-width="0.8"/>
<line x1="1219" y1="205" x2="1219" y2="210" stroke="#c8c8c8" stroke-width="0.8"/>
<rect x="1217.4" y="238.3" width="71.2" height="46.3" fill="#ffffff"/>
<rect x="1223.5" y="239.4" width="64.09999999999991" height="40.599999999999994" fill="none" stroke="#9a9a9a" stroke-width="0.6"/>
<path d="M1226.30 280.00 V244.40 H1232.15 V243.20 H1238.00 V245.20 H1243.85 V242.90 H1249.70 V249.30 H1255.55 V242.40 H1261.40 V244.40 H1267.25 V241.20 H1273.10 V245.20 H1278.95 V246.60 H1284.80 V280.00 Z" fill="#1f77b4"/>
<line x1="1220" y1="280.0" x2="1223" y2="280.0" stroke="#c8c8c8" stroke-width="0.7"/>
<line x1="1220" y1="272.8" x2="1223" y2="272.8" stroke="#c8c8c8" stroke-width="0.7"/>
<line x1="1220" y1="265.6" x2="1223" y2="265.6" stroke="#c8c8c8" stroke-width="0.7"/>
<line x1="1220" y1="258.4" x2="1223" y2="258.4" stroke="#c8c8c8" stroke-width="0.7"/>
<line x1="1220" y1="251.2" x2="1223" y2="251.2" stroke="#c8c8c8" stroke-width="0.7"/>
<line x1="1228.8" y1="282.5" x2="1231.8" y2="282.5" stroke="#c8c8c8" stroke-width="0.8"/>
<line x1="1242.0" y1="282.5" x2="1245.0" y2="282.5" stroke="#c8c8c8" stroke-width="0.8"/>
<line x1="1255.2" y1="282.5" x2="1258.2" y2="282.5" stroke="#c8c8c8" stroke-width="0.8"/>
<line x1="1268.4" y1="282.5" x2="1271.4" y2="282.5" stroke="#c8c8c8" stroke-width="0.8"/>
<line x1="1281.6" y1="282.5" x2="1284.6" y2="282.5" stroke="#c8c8c8" stroke-width="0.8"/>
<rect x="1217.4" y="290.4" width="71.2" height="44.8" fill="#ffffff"/>
<rect x="1223.5" y="291.2" width="64.09999999999991" height="40.900000000000034" fill="none" stroke="#9a9a9a" stroke-width="0.6"/>
<path d="M1226.30 332.10 V298.80 H1232.15 V297.20 H1238.00 V296.80 H1243.85 V300.70 H1249.70 V296.10 H1255.55 V295.00 H1261.40 V295.60 H1267.25 V296.80 H1273.10 V293.00 H1278.95 V296.80 H1284.80 V332.10 Z" fill="#1f77b4"/>
<line x1="1220" y1="332.1" x2="1223" y2="332.1" stroke="#c8c8c8" stroke-width="0.7"/>
<line x1="1220" y1="323.1" x2="1223" y2="323.1" stroke="#c8c8c8" stroke-width="0.7"/>
<line x1="1220" y1="314.1" x2="1223" y2="314.1" stroke="#c8c8c8" stroke-width="0.7"/>
<line x1="1220" y1="305.1" x2="1223" y2="305.1" stroke="#c8c8c8" stroke-width="0.7"/>
<line x1="1220" y1="296.1" x2="1223" y2="296.1" stroke="#c8c8c8" stroke-width="0.7"/>
<line x1="1224.0" y1="334.2" x2="1228.0" y2="334.2" stroke="#c8c8c8" stroke-width="0.8"/>
<line x1="1235.5" y1="334.2" x2="1239.5" y2="334.2" stroke="#c8c8c8" stroke-width="0.8"/>
<line x1="1247.0" y1="334.2" x2="1251.0" y2="334.2" stroke="#c8c8c8" stroke-width="0.8"/>
<line x1="1258.5" y1="334.2" x2="1262.5" y2="334.2" stroke="#c8c8c8" stroke-width="0.8"/>
<line x1="1270.0" y1="334.2" x2="1274.0" y2="334.2" stroke="#c8c8c8" stroke-width="0.8"/>
<line x1="1281.5" y1="334.2" x2="1285.5" y2="334.2" stroke="#c8c8c8" stroke-width="0.8"/>
<rect x="1218" y="343.1" width="70" height="43.6" fill="#ffffff" stroke="#6cc4fc" stroke-width="2"/>
<rect x="1225" y="345.1" width="59.799999999999955" height="36.5" fill="none" stroke="#9a9a9a" stroke-width="0.6"/>
<path d="M1227.60 381.60 V349.90 H1233.04 V347.10 H1238.48 V351.50 H1243.92 V356.20 H1249.36 V357.00 H1254.80 V365.40 H1260.24 V372.00 H1265.68 V373.50 H1271.12 V378.70 H1276.56 V380.10 H1282.00 V381.60 Z" fill="#1f77b4"/>
<line x1="1221" y1="381.6" x2="1224.5" y2="381.6" stroke="#c8c8c8" stroke-width="0.7"/>
<line x1="1221" y1="377.0" x2="1224.5" y2="377.0" stroke="#c8c8c8" stroke-width="0.7"/>
<line x1="1221" y1="372.4" x2="1224.5" y2="372.4" stroke="#c8c8c8" stroke-width="0.7"/>
<line x1="1221" y1="367.8" x2="1224.5" y2="367.8" stroke="#c8c8c8" stroke-width="0.7"/>
<line x1="1221" y1="363.2" x2="1224.5" y2="363.2" stroke="#c8c8c8" stroke-width="0.7"/>
<line x1="1221" y1="358.6" x2="1224.5" y2="358.6" stroke="#c8c8c8" stroke-width="0.7"/>
<line x1="1221" y1="354.0" x2="1224.5" y2="354.0" stroke="#c8c8c8" stroke-width="0.7"/>
<line x1="1221" y1="349.4" x2="1224.5" y2="349.4" stroke="#c8c8c8" stroke-width="0.7"/>
<line x1="1226.0" y1="383.8" x2="1229.0" y2="383.8" stroke="#c8c8c8" stroke-width="0.8"/>
<line x1="1234.0" y1="383.8" x2="1237.0" y2="383.8" stroke="#c8c8c8" stroke-width="0.8"/>
<line x1="1242.0" y1="383.8" x2="1245.0" y2="383.8" stroke="#c8c8c8" stroke-width="0.8"/>
<line x1="1250.0" y1="383.8" x2="1253.0" y2="383.8" stroke="#c8c8c8" stroke-width="0.8"/>
<line x1="1258.0" y1="383.8" x2="1261.0" y2="383.8" stroke="#c8c8c8" stroke-width="0.8"/>
<line x1="1266.0" y1="383.8" x2="1269.0" y2="383.8" stroke="#c8c8c8" stroke-width="0.8"/>
<line x1="1274.0" y1="383.8" x2="1277.0" y2="383.8" stroke="#c8c8c8" stroke-width="0.8"/>
<line x1="1282.0" y1="383.8" x2="1285.0" y2="383.8" stroke="#c8c8c8" stroke-width="0.8"/>
<line x1="978" y1="418.5" x2="982" y2="418.5" stroke="#8a9099" stroke-width="1"/>
<line x1="652.5" y1="416" x2="652.5" y2="419" stroke="#8a9099" stroke-width="1"/>
<line x1="1198.5" y1="257" x2="1198.5" y2="264.5" stroke="#54687a" stroke-width="1"/>
</svg>
<svg style="position:absolute;left:0;top:0" width="1301" height="691" viewBox="0 0 1301 691">
<rect x="4" y="5" width="12" height="12" rx="2" fill="#b93a36"/>
<path d="M10.6 9.6 H16 V15 Q16 17 14 17 H10.6 Z" fill="#ffffff"/>
<path d="M5.6 7.6 L9.2 6.6 M11.2 6.6 L14.5 7 M5.6 11.5 L8.6 8.5 M5.3 14.6 L7.8 13.2 M7.2 12.3 L9.6 14.8" stroke="#ffffff" stroke-width="1" opacity="0.8" fill="none"/>
<path d="M15.2 10.8 Q14.6 9.8 13.2 9.8 Q11.2 9.8 11.2 11.6 Q11.2 12.9 13.3 13.3 Q15.4 13.7 15.4 15 Q15.4 16.8 13.2 16.8 Q11.5 16.8 10.9 15.6" stroke="#444" stroke-width="1.6" fill="none"/>
<line x1="1183" y1="10.5" x2="1193" y2="10.5" stroke="#7a7a7a" stroke-width="1"/>
<rect x="1228.5" y="7.5" width="7" height="7" fill="none" stroke="#7a7a7a" stroke-width="1"/>
<path d="M1230.5 7.5 V5.5 H1237.5 V12.5 H1235.5" fill="none" stroke="#7a7a7a" stroke-width="1"/>
<path d="M1274 5 L1284 15 M1284 5 L1274 15" stroke="#7a7a7a" stroke-width="1"/>
<path d="M15.5 65 H22.7 L28.5 70.8 V81.5 Q28.5 82.6 27.4 82.6 H15.6 Q14.5 82.6 14.5 81.5 V66.1 Q14.5 65 15.5 65 Z" fill="#343e4e"/>
<path d="M22.1 66.6 V72 H27.4 Z" fill="#c9cdd0"/>
<path d="M57 68 Q57 67 58 67 H64 L65.5 68.8 H72.5 Q73.3 68.8 73.3 69.6 V71.6 H59.2 L57.6 80 H57 Z" fill="#343e4e"/>
<path d="M59.6 72.6 H75.2 L72.8 80.3 Q72.6 81 71.8 81 H57.4 Z" fill="#343e4e"/>
<path d="M103 66 H113.7 L117 69.16 V80.8 Q117 81.8 116 81.8 H103 Q102 81.8 102 80.8 V67 Q102 66 103 66 Z" fill="#343e4e"/>
<rect x="103.50" y="68.05" width="9.00" height="3.79" fill="#c9cdd0"/>
<circle cx="109.50" cy="77.53" r="2.70" fill="#c9cdd0"/>
<path d="M148.4 64.3 H159.568 L163 67.42 V78.9 Q163 79.9 162 79.9 H148.4 Q147.4 79.9 147.4 78.9 V65.3 Q147.4 64.3 148.4 64.3 Z" fill="#343e4e"/>
<rect x="148.96" y="66.33" width="9.36" height="3.74" fill="#c9cdd0"/>
<circle cx="155.20" cy="75.69" r="2.81" fill="#c9cdd0"/>
<path d="M144.4 70 V82.2 Q144.4 83 145.2 83 H157.7" fill="none" stroke="#343e4e" stroke-width="1.5"/>
<path d="M194 68.1 V80.2 L203.5 74.2 Z" fill="#0a7a5a"/>
<path d="M241.8 80 H234.2 Q233.2 80 233.2 79 V69 Q233.2 68 234.2 68 H249.9 Q250.9 68 250.9 69 V76" fill="none" stroke="#26303e" stroke-width="1.9"/>
<path d="M244 74 V84 L252.2 79 Z" fill="#0a7a5a"/>
<path d="M283.7 78.7 H278.2 Q277.2 78.7 277.2 77.7 V67.8 Q277.2 66.8 278.2 66.8 H293.9 Q294.9 66.8 294.9 67.8 V76.4" fill="none" stroke="#26303e" stroke-width="1.9"/>
<path d="M286 76 V83 L291 79.5 Z M291 76 V83 L296.2 79.5 Z" fill="#0a7a5a"/>
<path d="M322 64.9 H329.7 M322 81 H329.7 M326 64.9 V81" fill="none" stroke="#26303e" stroke-width="1.7"/>
<path d="M331 74.5 V84 L338.5 79.2 Z" fill="#0a7a5a"/>
<rect x="364.9" y="68" width="2.1" height="11.9" fill="#1f6fbf"/><rect x="369.2" y="68" width="2.6" height="11.9" fill="#1f6fbf"/>
<path d="M373.5 68 V80 L383 74 Z" fill="#1f6fbf"/>
<path d="M409.6 75.6 A8.2 7.5 0 0 1 424.6 72.6" fill="none" stroke="#1f6fbf" stroke-width="1.9"/>
<path d="M420.5 75.8 L427.3 71.6 L426.6 77.2 Z" fill="#1f6fbf"/>
<circle cx="417.5" cy="77.6" r="1.35" fill="#1f6fbf"/>
<path d="M461.4 65.1 V77 M456.2 71.8 L461.4 77 L466.6 71.8" fill="none" stroke="#1f6fbf" stroke-width="1.8"/>
<circle cx="461.5" cy="81" r="1.75" fill="#1f6fbf"/>
<path d="M505.5 77.5 V66.6 M500.2 71.8 L505.5 66.5 L510.8 71.8" fill="none" stroke="#1f6fbf" stroke-width="1.8"/>
<circle cx="505.5" cy="81" r="1.75" fill="#1f6fbf"/>
<path d="M542.2 69 V79 L549.4 74 Z M550.2 69 V79 L557.5 74 Z" fill="#1f6fbf"/>
<rect x="588.2" y="69" width="10.6" height="10.1" fill="#1f6fbf"/>
<rect x="629.3" y="65.1" width="17.4" height="17.5" rx="1.6" fill="#343e4e"/>
<path d="M638.1 67 H644.9 V80.7 H638.1 Z M630.9 67 H635.7 V68.6 H633 V71.6 H630.9 Z M630.9 76.1 H633 V79.1 H635.7 V80.7 H630.9 Z" fill="#c9cdd0"/>
<path d="M675.4 81.7 L683 74.1" stroke="#343e4e" stroke-width="4.2" stroke-linecap="round"/>
<circle cx="685.6" cy="70.4" r="5.6" fill="#343e4e"/>
<path d="M687.33 70.93 L685.07 68.67 L690.77 62.97 L693.03 65.23 Z" fill="#c9cdd0"/><circle cx="686.2" cy="69.8" r="1.6" fill="#c9cdd0"/>
<path d="M723.2 65.7 H727.8 Q729.9 65.7 729.9 67.8 V72.2 Q729.9 74.2 727.8 74.2 H723.3 Q721.2 74.2 721.2 76.3 V78.8 H718.4 Q716.3 78.8 716.3 75.5 V73.2 Q716.3 70 718.8 70 H726 V69.2 H721.2 V67.8 Q721.2 65.7 723.2 65.7 Z" fill="#3771a8"/>
<path d="M727.8 83.3 H723.2 Q721.1 83.3 721.1 81.2 V76.8 Q721.1 74.8 723.2 74.8 H727.7 Q729.8 74.8 729.8 72.7 V70.2 H732.6 Q734.7 70.2 734.7 73.5 V75.8 Q734.7 79 732.2 79 H725 V79.8 H729.8 V81.2 Q729.8 83.3 727.8 83.3 Z" fill="#ffd43b"/>
<circle cx="723.4" cy="67.6" r="0.7" fill="#c9cdd0"/><circle cx="727.6" cy="81.4" r="0.7" fill="#c9cdd0"/>
<path d="M1205 72.5 H1212 L1208.5 76.5 Z" fill="#b0b5ba"/>
<path d="M1229 68.2 Q1229 67.3 1229.9 67.3 H1235.4 L1236.9 68.9 H1244.6 Q1245.4 68.9 1245.4 69.7 V71.5 H1231.3 L1229.6 80.5 H1229 Z" fill="#343e4e"/>
<path d="M1231.7 72.4 H1247.4 L1245.2 80.4 Q1245 81 1244.2 81 H1229.5 Z" fill="#343e4e"/>
<path d="M1281.5 67 L1288 73.6 H1284 V81 H1279 V73.6 H1275 Z" fill="#343e4e"/>
<rect x="13.450000000000001" y="130.35" width="11.399999999999999" height="8.800000000000022" rx="1.2" fill="none" stroke="#343e4e" stroke-width="1.3"/>
<rect x="19.5" y="129.7" width="5.999999999999999" height="3.2" fill="#343e4e"/>
<rect x="669.85" y="434.15" width="12.2" height="9.00000000000001" rx="1.2" fill="none" stroke="#343e4e" stroke-width="1.3"/>
<rect x="675.9000000000001" y="433.5" width="6.8" height="3.2" fill="#343e4e"/>
<line x1="625.1" y1="131.6" x2="634.8" y2="131.6" stroke="#343e4e" stroke-width="1.25" stroke-linecap="round"/>
<line x1="625.1" y1="134.6" x2="634.8" y2="134.6" stroke="#343e4e" stroke-width="1.25" stroke-linecap="round"/>
<line x1="625.1" y1="137.5" x2="634.8" y2="137.5" stroke="#343e4e" stroke-width="1.25" stroke-linecap="round"/>
<line x1="1280.1999999999998" y1="107.6" x2="1290.0" y2="107.6" stroke="#343e4e" stroke-width="1.25" stroke-linecap="round"/>
<line x1="1280.1999999999998" y1="110.8" x2="1290.0" y2="110.8" stroke="#343e4e" stroke-width="1.25" stroke-linecap="round"/>
<line x1="1280.1999999999998" y1="113.9" x2="1290.0" y2="113.9" stroke="#343e4e" stroke-width="1.25" stroke-linecap="round"/>
<line x1="1279.0" y1="435.4" x2="1289.1000000000001" y2="435.4" stroke="#343e4e" stroke-width="1.25" stroke-linecap="round"/>
<line x1="1279.0" y1="438.5" x2="1289.1000000000001" y2="438.5" stroke="#343e4e" stroke-width="1.25" stroke-linecap="round"/>
<line x1="1279.0" y1="441.6" x2="1289.1000000000001" y2="441.6" stroke="#343e4e" stroke-width="1.25" stroke-linecap="round"/>
<path d="M134.1 138.4 L139.9 144.20000000000002 M139.9 138.4 L134.1 144.20000000000002" stroke="#19232d" stroke-width="1.3"/>
<path d="M248.1 138.4 L253.9 144.20000000000002 M253.9 138.4 L248.1 144.20000000000002" stroke="#19232d" stroke-width="1.3"/>
<path d="M770.6 441.70000000000005 L776.4 447.5 M776.4 441.70000000000005 L770.6 447.5" stroke="#19232d" stroke-width="1.3"/>
<path d="M670.9 105.5 H677.856 L680.1 107.58 V114.9 Q680.1 115.9 679.1 115.9 H670.9 Q669.9 115.9 669.9 114.9 V106.5 Q669.9 105.5 670.9 105.5 Z" fill="#343e4e"/>
<rect x="670.92" y="106.85" width="6.12" height="2.50" fill="#fafafa"/>
<circle cx="675.00" cy="113.09" r="1.84" fill="#fafafa"/>
<path d="M712.2 104.2 H719.312 L721.6 106.32000000000001 V113.8 Q721.6 114.8 720.6 114.8 H712.2 Q711.2 114.8 711.2 113.8 V105.2 Q711.2 104.2 712.2 104.2 Z" fill="#343e4e"/>
<rect x="712.24" y="105.58" width="6.24" height="2.54" fill="#fafafa"/>
<circle cx="716.40" cy="111.94" r="1.87" fill="#fafafa"/>
<path d="M709 108 V116 Q709 116.6 709.6 116.6 H718" fill="none" stroke="#343e4e" stroke-width="1.1"/>
<rect x="752.2" y="107.8" width="7.3" height="8.6" rx="0.8" fill="none" stroke="#343e4e" stroke-width="1.4"/>
<path d="M749.6 113.5 V105.4 Q749.6 104.6 750.4 104.6 H757" fill="none" stroke="#6b7380" stroke-width="1.1"/>
<rect x="791" y="105.8" width="8.1" height="1.3" fill="#343e4e"/><rect x="793.6" y="104.9" width="3" height="1" fill="#343e4e"/>
<path d="M791.6 108.5 H798.8 V115 Q798.8 115.7 798.1 115.7 H792.3 Q791.6 115.7 791.6 115 Z" fill="#343e4e"/>
<path d="M830.5 106.5 L840 116 M839.5 106.2 L830.2 115.5 M841.6 108.2 L832.4 117" stroke="#343e4e" stroke-width="1.2"/>
<path d="M870.4 110.7 L875.3 106.7 V108.7 H880 V112.7 H875.3 V114.7 Z" fill="#343e4e"/>
<path d="M919.6 110.7 L914.7 106.7 V108.7 H910.2 V112.7 H914.7 V114.7 Z" fill="#343e4e"/>
<path d="M948.5 108.6 H957 M952.8 104.4 V113" stroke="#b3b8bd" stroke-width="1.3"/>
<circle cx="957.6" cy="113.4" r="2.3" fill="none" stroke="#b3b8bd" stroke-width="1.1"/><path d="M959.3 115.1 L961.3 117.2" stroke="#b3b8bd" stroke-width="1.2"/>
<path d="M988.3 108.6 H997" stroke="#b3b8bd" stroke-width="1.3"/>
<circle cx="997.6" cy="113.4" r="2.3" fill="none" stroke="#b3b8bd" stroke-width="1.1"/><path d="M999.3 115.1 L1001.3 117.2" stroke="#b3b8bd" stroke-width="1.2"/>
<path d="M1188 444.2 H1195.9 V436" fill="none" stroke="#7d8592" stroke-width="1.6"/>
<rect x="1185.6" y="433.2" width="8.6" height="1.1" fill="#343e4e"/><rect x="1188" y="432.3" width="4" height="1" fill="#343e4e"/>
<rect x="1186.2" y="435" width="6.8" height="8" fill="#343e4e"/>
<rect x="1227.5" y="435.2" width="7.2" height="6.8" fill="#8a8f94"/>
<path d="M632 168.8 L637 163.8 L642 168.8 Z" fill="#c9cdd0"/>
<rect x="631.5" y="173.5" width="11" height="530" rx="5" fill="none" stroke="#c9cdd0" stroke-width="1"/>
<rect x="632.3" y="232.5" width="9.2" height="239" rx="4.6" fill="#acb1b6"/>
<path d="M1286 472.8 L1291 467.8 L1296 472.8 Z" fill="#c9cdd0"/>
<rect x="1285.5" y="477.5" width="11.4" height="240" rx="5" fill="none" stroke="#c9cdd0" stroke-width="1"/>
<rect x="1286.4" y="597" width="9" height="57.8" rx="4.5" fill="#acb1b6"/>
</svg>
<div style="position:absolute;left:23px;top:6.10px;font:normal normal 12.6px 'Liberation Sans', sans-serif;line-height:1.117em;color:#8c8c8c;white-space:pre;letter-spacing:0.024px;">Spyder (Python 3.10)</div>
<div style="position:absolute;left:7px;top:33.03px;font:normal normal 13px 'Liberation Sans', sans-serif;line-height:1.117em;color:#19232d;white-space:pre;letter-spacing:0.060px;">Arquivo</div>
<div style="position:absolute;left:60.5px;top:33.03px;font:normal normal 13px 'Liberation Sans', sans-serif;line-height:1.117em;color:#19232d;white-space:pre;letter-spacing:-0.078px;">Editar</div>
<div style="position:absolute;left:102px;top:33.03px;font:normal normal 13px 'Liberation Sans', sans-serif;line-height:1.117em;color:#19232d;white-space:pre;letter-spacing:-0.257px;">Pesquisar</div>
<div style="position:absolute;left:166px;top:33.03px;font:normal normal 13px 'Liberation Sans', sans-serif;line-height:1.117em;color:#19232d;white-space:pre;letter-spacing:0.216px;">Código</div>
<div style="position:absolute;left:217px;top:33.03px;font:normal normal 13px 'Liberation Sans', sans-serif;line-height:1.117em;color:#19232d;white-space:pre;letter-spacing:-0.414px;">Executar</div>
<div style="position:absolute;left:274.4px;top:33.03px;font:normal normal 13px 'Liberation Sans', sans-serif;line-height:1.117em;color:#19232d;white-space:pre;letter-spacing:0.090px;">Depurar</div>
<div style="position:absolute;left:330.6px;top:33.03px;font:normal normal 13px 'Liberation Sans', sans-serif;line-height:1.117em;color:#19232d;white-space:pre;letter-spacing:-0.313px;">Consoles</div>
<div style="position:absolute;left:391.2px;top:33.03px;font:normal normal 13px 'Liberation Sans', sans-serif;line-height:1.117em;color:#19232d;white-space:pre;letter-spacing:-0.050px;">Projetos</div>
<div style="position:absolute;left:447.4px;top:33.03px;font:normal normal 13px 'Liberation Sans', sans-serif;line-height:1.117em;color:#19232d;white-space:pre;letter-spacing:-0.209px;">Ferramentas</div>
<div style="position:absolute;left:527px;top:33.03px;font:normal normal 13px 'Liberation Sans', sans-serif;line-height:1.117em;color:#19232d;white-space:pre;letter-spacing:-0.272px;">Ver</div>
<div style="position:absolute;left:554.6px;top:33.03px;font:normal normal 13px 'Liberation Sans', sans-serif;line-height:1.117em;color:#19232d;white-space:pre;letter-spacing:-0.230px;">Ajuda</div>
<div style="position:absolute;left:758.5px;top:69.19px;font:normal normal 11.5px 'Liberation Sans', sans-serif;line-height:1.117em;color:#19232d;white-space:pre;letter-spacing:-0.377px;">C:\Users\Lenovo</div>
<div style="position:absolute;left:8.5px;top:100.24px;font:normal normal 12px 'Liberation Sans', sans-serif;line-height:1.117em;color:#19232d;white-space:pre;letter-spacing:-0.379px;">C:\Users\Lenovo\.spyder-py3\projetos\base_credit.py</div>
<div style="position:absolute;left:47.5px;top:134.78px;font:normal normal 11.4px 'Liberation Sans', sans-serif;line-height:1.117em;color:#19232d;white-space:pre;letter-spacing:-0.002px;">base_credit.py*</div>
<div style="position:absolute;left:161px;top:134.78px;font:normal normal 11.4px 'Liberation Sans', sans-serif;line-height:1.117em;color:#19232d;white-space:pre;letter-spacing:-0.309px;">base_sensus.py</div>
<div style="position:absolute;left:1029.5px;top:107.12px;font:normal normal 10.7px 'Liberation Sans', sans-serif;line-height:1.117em;color:#5a6d80;white-space:pre;letter-spacing:0.406px;">99 %</div>
<div style="position:absolute;left:856.8px;top:400.02px;font:normal normal 10.7px 'Liberation Sans', sans-serif;line-height:1.117em;color:#19232d;white-space:pre;letter-spacing:-0.009px;">Ajuda</div>
<div style="position:absolute;left:894.5px;top:400.02px;font:normal normal 10.7px 'Liberation Sans', sans-serif;line-height:1.117em;color:#19232d;white-space:pre;letter-spacing:0.101px;">Explorador de variáveis</div>
<div style="position:absolute;left:1017.6px;top:400.02px;font:normal normal 10.7px 'Liberation Sans', sans-serif;line-height:1.117em;color:#19232d;white-space:pre;letter-spacing:-0.120px;">Figuras</div>
<div style="position:absolute;left:1062.8px;top:400.02px;font:normal normal 10.7px 'Liberation Sans', sans-serif;line-height:1.117em;color:#19232d;white-space:pre;letter-spacing:-0.012px;">Arquivos</div>
<div style="position:absolute;left:704.4px;top:439.42px;font:normal normal 10.7px 'Liberation Sans', sans-serif;line-height:1.117em;color:#19232d;white-space:pre;letter-spacing:-0.021px;">Console 1/A</div>
</body></html>
